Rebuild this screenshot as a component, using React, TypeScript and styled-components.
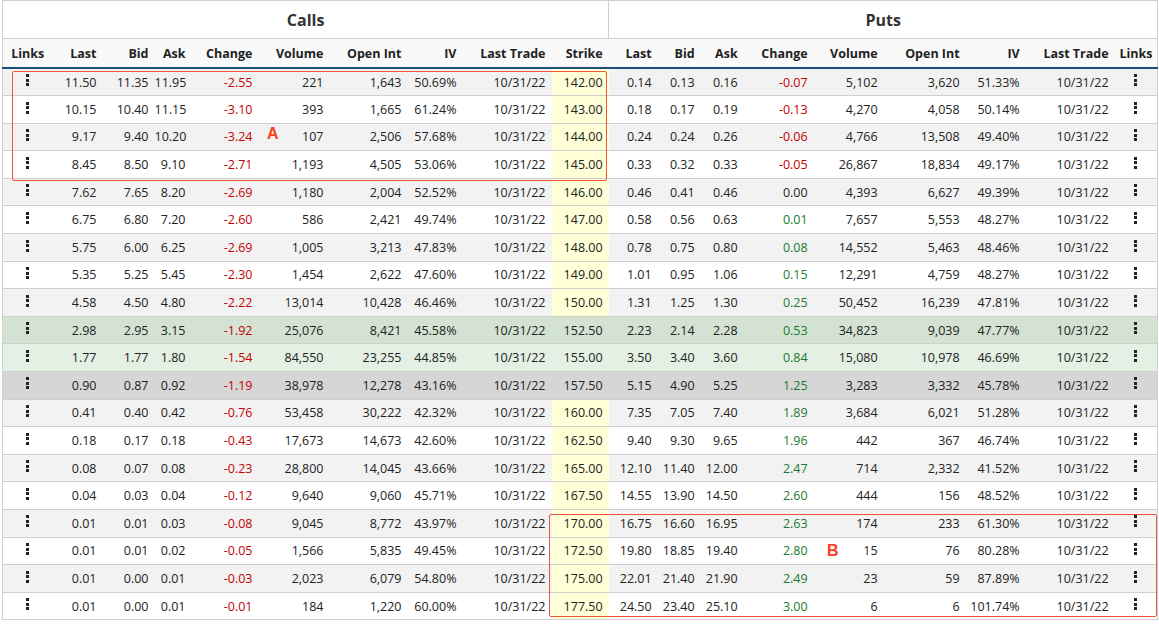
import React from 'react';
import styled, { createGlobalStyle } from 'styled-components';

const Global = createGlobalStyle`
  body { margin: 0; background: #fff; font-family: "Open Sans", "Noto Sans", sans-serif; color: #222; }
`;

const Wrap = styled.div`
  position: relative;
  width: 1155px;
  margin-left: 2px;
`;

const Table = styled.table`
  border-collapse: collapse;
  table-layout: fixed;
  width: 1155px;
  font-size: 12.5px;
  border-left: 1px solid #d0d0d0;
  border-right: 1px solid #d0d0d0;
`;

const Title = styled.th<{ sep?: boolean }>`
  height: 37px;
  padding: 0;
  font-size: 16px;
  font-weight: 700;
  color: #333;
  border-top: 1px solid #d0d0d0;
  border-bottom: 1px solid #d0d0d0;
  border-right: ${(p) => (p.sep ? '1px solid #d0d0d0' : 'none')};
`;

const Head = styled.th<{ center?: boolean }>`
  height: 28px;
  font-weight: 700;
  font-size: 12.5px;
  text-align: ${(p) => (p.center ? 'center' : 'right')};
  padding: 0 ${(p) => (p.center ? '0' : '6px')} 0 0;
  background: #f9f9f9;
  border-bottom: 2px solid #1f4e79;
  white-space: nowrap;
`;

const Row = styled.tr<{ bg: string }>`
  background: ${(p) => p.bg};
  height: 27.6px;
  border-bottom: 1px solid #cfcfcf;
`;

const Cell = styled.td<{ color?: string; yellow?: boolean }>`
  text-align: right;
  padding: 0 6px 0 0;
  color: ${(p) => p.color || '#222'};
  background: ${(p) => (p.yellow ? '#ffffd8' : 'transparent')};
  white-space: nowrap;
`;

const LinkCell = styled.td`
  text-align: center;
  padding: 0 0 6px;
`;

const Dots = styled.span`
  display: inline-flex;
  flex-direction: column;
  gap: 1.5px;
  vertical-align: middle;
  i { width: 3px; height: 3px; background: #222; display: block; }
`;

const Box = styled.div<{ l: number; t: number; w: number; h: number }>`
  position: absolute;
  left: ${(p) => p.l}px;
  top: ${(p) => p.t}px;
  width: ${(p) => p.w}px;
  height: ${(p) => p.h}px;
  border: 1.5px solid #f0553a;
  border-radius: 2px;
  pointer-events: none;
`;

const Mark = styled.div<{ l: number; t: number }>`
  position: absolute;
  left: ${(p) => p.l}px;
  top: ${(p) => p.t}px;
  color: #ff3b1a;
  font-weight: 700;
  font-size: 16px;
  font-family: "Liberation Sans", sans-serif;
`;

const widths = [50, 50, 52, 37, 67, 71, 78, 55, 89, 57, 49, 43, 43, 70, 70, 82, 60, 89, 43];

const rows = [
  '11.50 11.35 11.95 -2.55 221 1,643 50.69% 142.00 0.14 0.13 0.16 -0.07 5,102 3,620 51.33%',
  '10.15 10.40 11.15 -3.10 393 1,665 61.24% 143.00 0.18 0.17 0.19 -0.13 4,270 4,058 50.14%',
  '9.17 9.40 10.20 -3.24 107 2,506 57.68% 144.00 0.24 0.24 0.26 -0.06 4,766 13,508 49.40%',
  '8.45 8.50 9.10 -2.71 1,193 4,505 53.06% 145.00 0.33 0.32 0.33 -0.05 26,867 18,834 49.17%',
  '7.62 7.65 8.20 -2.69 1,180 2,004 52.52% 146.00 0.46 0.41 0.46 0.00 4,393 6,627 49.39%',
  '6.75 6.80 7.20 -2.60 586 2,421 49.74% 147.00 0.58 0.56 0.63 0.01 7,657 5,553 48.27%',
  '5.75 6.00 6.25 -2.69 1,005 3,213 47.83% 148.00 0.78 0.75 0.80 0.08 14,552 5,463 48.46%',
  '5.35 5.25 5.45 -2.30 1,454 2,622 47.60% 149.00 1.01 0.95 1.06 0.15 12,291 4,759 48.27%',
  '4.58 4.50 4.80 -2.22 13,014 10,428 46.46% 150.00 1.31 1.25 1.30 0.25 50,452 16,239 47.81%',
  '2.98 2.95 3.15 -1.92 25,076 8,421 45.58% 152.50 2.23 2.14 2.28 0.53 34,823 9,039 47.77%',
  '1.77 1.77 1.80 -1.54 84,550 23,255 44.85% 155.00 3.50 3.40 3.60 0.84 15,080 10,978 46.69%',
  '0.90 0.87 0.92 -1.19 38,978 12,278 43.16% 157.50 5.15 4.90 5.25 1.25 3,283 3,332 45.78%',
  '0.41 0.40 0.42 -0.76 53,458 30,222 42.32% 160.00 7.35 7.05 7.40 1.89 3,684 6,021 51.28%',
  '0.18 0.17 0.18 -0.43 17,673 14,673 42.60% 162.50 9.40 9.30 9.65 1.96 442 367 46.74%',
  '0.08 0.07 0.08 -0.23 28,800 14,045 43.66% 165.00 12.10 11.40 12.00 2.47 714 2,332 41.52%',
  '0.04 0.03 0.04 -0.12 9,640 9,060 45.71% 167.50 14.55 13.90 14.50 2.60 444 156 48.52%',
  '0.01 0.01 0.03 -0.08 9,045 8,772 43.97% 170.00 16.75 16.60 16.95 2.63 174 233 61.30%',
  '0.01 0.01 0.02 -0.05 1,566 5,835 49.45% 172.50 19.80 18.85 19.40 2.80 15 76 80.28%',
  '0.01 0.00 0.01 -0.03 2,023 6,079 54.80% 175.00 22.01 21.40 21.90 2.49 23 59 87.89%',
  '0.01 0.00 0.01 -0.01 184 1,220 60.00% 177.50 24.50 23.40 25.10 3.00 6 6 101.74%',
].map((r) => r.split(' '));

const special: Record<number, string> = { 9: '#d3e2d3', 10: '#e3f0e3', 11: '#d6d6d6' };

const heads = ['Links', 'Last', 'Bid', 'Ask', 'Change', 'Volume', 'Open Int', 'IV', 'Last Trade', 'Strike',
  'Last', 'Bid', 'Ask', 'Change', 'Volume', 'Open Int', 'IV', 'Last Trade', 'Links'];

const DotsIcon = () => (
  <Dots><i /><i /><i /></Dots>
);

const changeColor = (v: string) => (v.startsWith('-') ? '#c40000' : v === '0.00' ? '#222' : '#1c7a30');

export default function App() {
  return (
    <Wrap>
      <Global />
      <Table>
        <colgroup>
          {widths.map((w, i) => <col key={i} style={{ width: w }} />)}
        </colgroup>
        <thead>
          <tr>
            <Title colSpan={10} sep>Calls</Title>
            <Title colSpan={9}>Puts</Title>
          </tr>
          <tr>
            {heads.map((h, i) => (
              <Head key={i} center={i === 0 || i === 18}>{h}</Head>
            ))}
          </tr>
        </thead>
        <tbody>
          {rows.map((r, i) => {
            const bg = special[i] || (i % 2 === 0 ? '#f2f2f2' : '#ffffff');
            const yellow = !special[i];
            return (
              <Row key={i} bg={bg}>
                <LinkCell><DotsIcon /></LinkCell>
                <Cell>{r[0]}</Cell>
                <Cell>{r[1]}</Cell>
                <Cell>{r[2]}</Cell>
                <Cell color={changeColor(r[3])}>{r[3]}</Cell>
                <Cell>{r[4]}</Cell>
                <Cell>{r[5]}</Cell>
                <Cell>{r[6]}</Cell>
                <Cell>10/31/22</Cell>
                <Cell yellow={yellow}>{r[7]}</Cell>
                <Cell>{r[8]}</Cell>
                <Cell>{r[9]}</Cell>
                <Cell>{r[10]}</Cell>
                <Cell color={changeColor(r[11])}>{r[11]}</Cell>
                <Cell>{r[12]}</Cell>
                <Cell>{r[13]}</Cell>
                <Cell>{r[14]}</Cell>
                <Cell>10/31/22</Cell>
                <LinkCell><DotsIcon /></LinkCell>
              </Row>
            );
          })}
        </tbody>
      </Table>
      <Box l={10} t={71} w={593} h={108} />
      <Mark l={265} t={125}>A</Mark>
      <Box l={547} t={514} w={606} h={101} />
      <Mark l={825} t={542}>B</Mark>
    </Wrap>
  );
}
